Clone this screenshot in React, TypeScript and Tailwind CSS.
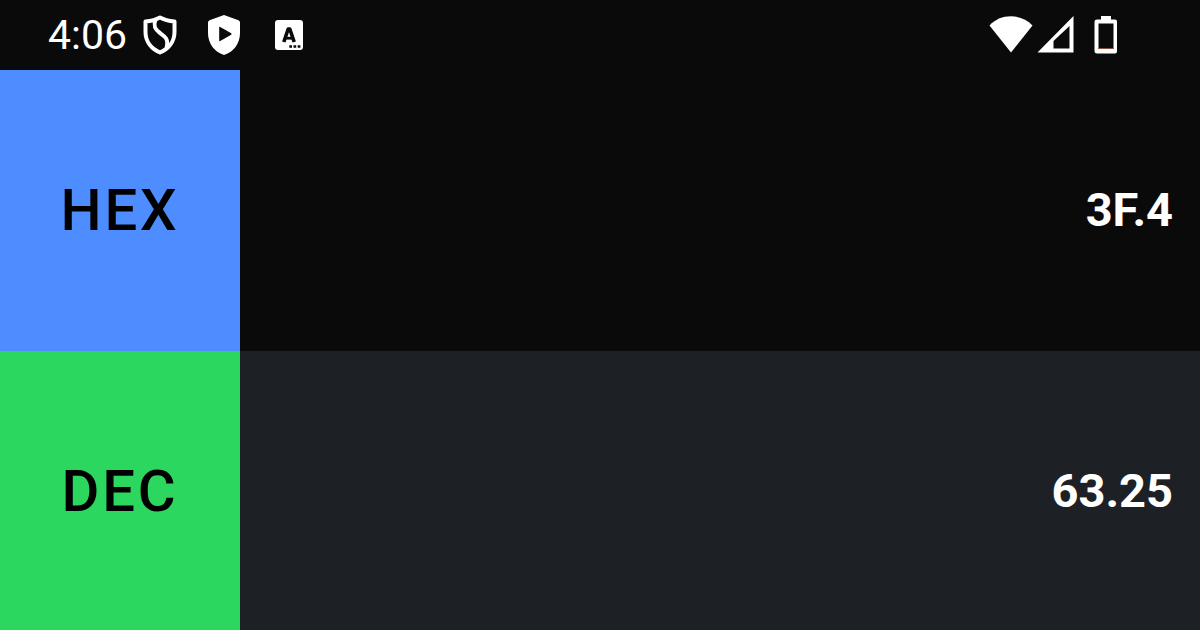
type Conversion = {
    label: string;
    value: string;
    buttonClass: string;
    rowClass: string;
};

const conversions: Conversion[] = [
    { label: 'HEX', value: '3F.4', buttonClass: 'bg-[#4d8dff]', rowClass: 'bg-[#0a0a0a]' },
    { label: 'DEC', value: '63.25', buttonClass: 'bg-[#2bd75e]', rowClass: 'bg-[#1d2024]' },
];

function ShieldOutlineIcon() {
    return (
        <svg width="34" height="40" viewBox="0 0 34 40" fill="none" stroke="white" strokeWidth="4" strokeLinejoin="round" aria-hidden="true">
            <path d="M17 2.500C12.500 5 7.500 6 2.500 6.500V17C2.500 27 9 34 17 37.500C25 34 31.500 27 31.500 17V6.500C26.500 6 21.500 5 17 2.500Z" />
            <path d="M12.500 4.500C10 11 12 14.500 17 18C22 21.500 26 24 23.500 33" />
        </svg>
    );
}

function ShieldPlayIcon() {
    return (
        <svg width="34" height="42" viewBox="0 0 34 42" aria-hidden="true">
            <path d="M17 1L31.500 6.300Q33 7 33 8.500V19C33 29 27 38 17 41C7 38 1 29 1 19V8.500Q1 7 2.500 6.300Z" fill="white" />
            <path d="M12.200 13.500V26.500Q12.200 27.500 13.200 27L24.200 20.700Q25 20 24.200 19.300L13.200 13Q12.200 12.500 12.200 13.500Z" fill="#0a0a0a" />
        </svg>
    );
}

function KeyboardLetterIcon() {
    return (
        <svg width="28" height="30" viewBox="0 0 28 30" aria-hidden="true">
            <rect width="28" height="30" rx="3" fill="white" />
            <g fill="none" stroke="#0a0a0a" strokeLinejoin="round">
                <path d="M8.800 22L13.200 9H14.800L19.200 22" strokeWidth="3.600" />
                <path d="M10.500 18.200H17.500" strokeWidth="2.800" />
            </g>
            <path d="M14.300 26.500H17M18.500 26.500H21.200M22.700 26.500H25.400" stroke="#0a0a0a" strokeWidth="2.600" />
        </svg>
    );
}

function WifiIcon() {
    return (
        <svg width="44" height="38" viewBox="0 0 44 38" fill="white" aria-hidden="true">
            <path d="M0.500 9.500C6 3.500 13.500 0.300 22 0.300C30.500 0.300 38 3.500 43.500 9.500L22 36.500Z" />
        </svg>
    );
}

function SignalIcon() {
    return (
        <svg width="37" height="38" viewBox="0 0 37 38" fill="white" fillRule="evenodd" aria-hidden="true">
            <path d="M0.500 36.500L36.500 0V36.500ZM16.500 32.500H32.500V10L16.500 25Z" />
        </svg>
    );
}

function BatteryIcon() {
    return (
        <svg width="24" height="38" viewBox="0 0 24 38" aria-hidden="true">
            <path d="M7 0H17V3.500H21Q23 3.500 23 5.500V35.500Q23 37.500 21 37.500H3Q0.500 37.500 0.500 35.500V5.500Q0.500 3.500 3 3.500H7ZM4.500 7.500V33H19.500V7.500Z" fill="white" fillRule="evenodd" />
            <path d="M4.500 32.500H19.500" stroke="#8a4a40" />
        </svg>
    );
}

function StatusBar() {
    return (
        <header className="flex h-[70px] shrink-0 items-center justify-between pr-[82px] pl-12">
            <div className="flex items-center">
                <time className="mr-4 text-[41px] leading-[48px]">4:06</time>
                <ShieldOutlineIcon />
                <div className="ml-[30px] flex items-center gap-[34px]">
                    <ShieldPlayIcon />
                    <KeyboardLetterIcon />
                </div>
            </div>
            <div className="flex items-center">
                <WifiIcon />
                <div className="ml-1 flex items-center gap-5">
                    <SignalIcon />
                    <BatteryIcon />
                </div>
            </div>
        </header>
    );
}

function ConversionRow({ label, value, buttonClass, rowClass }: Conversion) {
    return (
        <div className={`flex min-h-[281px] shrink-0 items-stretch ${rowClass}`}>
            <button type="button" className={`w-1/5 text-[58px] font-medium tracking-wider text-black ${buttonClass}`}>
                {label}
            </button>
            <output className="flex flex-1 items-center justify-end pr-[27px] text-[47px] font-bold">
                {value}
            </output>
        </div>
    );
}

export default function App() {
    return (
        <div className="flex h-screen flex-col overflow-hidden bg-[#0a0a0a] font-['Roboto',sans-serif] text-white">
            <StatusBar />
            <main className="flex flex-col">
                {conversions.map((conversion) => (
                    <ConversionRow key={conversion.label} {...conversion} />
                ))}
            </main>
        </div>
    );
}
